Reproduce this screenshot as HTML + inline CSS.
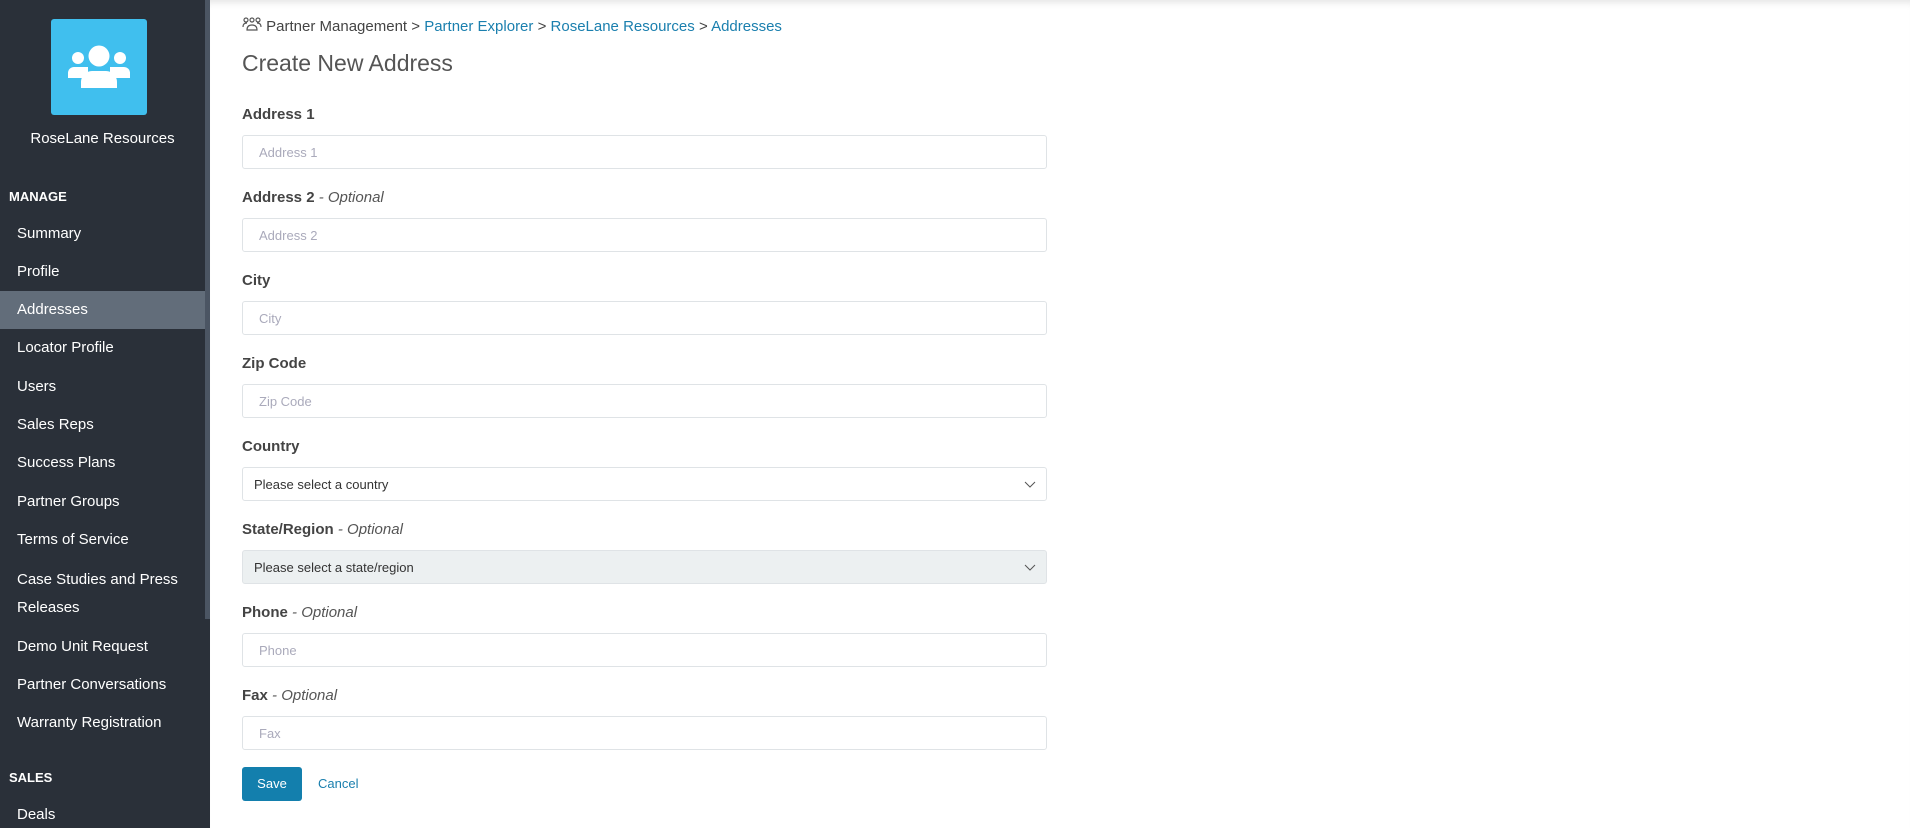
<!DOCTYPE html>
<html><head><meta charset="utf-8"><style>
*{box-sizing:border-box;margin:0;padding:0}
body{width:1910px;height:828px;overflow:hidden;background:#fff;font-family:"Liberation Sans",sans-serif;position:relative}
#sb{position:absolute;left:0;top:0;width:205px;height:828px;background:#2a3039;color:#fff}
#scroll{position:absolute;left:205px;top:0;width:5px;height:828px;background:#2a3039}
#scroll div{width:5px;height:619px;background:#4b5563}
.logo{position:absolute;left:51px;top:19px;width:96px;height:96px;background:#40bfee;border-radius:3px}
.name{position:absolute;left:0;width:205px;top:130px;text-align:center;font-size:15px}
.hd{position:absolute;left:9px;font-size:13px;font-weight:bold}
.it{position:absolute;left:17px;font-size:15px;line-height:20px}
.act{position:absolute;left:0;top:291px;width:205px;height:38px;background:#626d7a}
#main{position:absolute;left:210px;top:0;right:0;height:828px;box-shadow:inset 0 8px 8px -6px rgba(0,0,0,.12)}
.bc{position:absolute;left:242px;top:17px;font-size:15px;color:#444}
.bc a{color:#1a7fae;text-decoration:none}
h1{position:absolute;left:242px;top:50px;font-size:23px;font-weight:300;color:#555}
.lb{position:absolute;left:242px;font-size:15px;font-weight:bold;color:#444}
.lb i{font-weight:normal;color:#555}
.in{position:absolute;left:242px;width:805px;height:34px;border:1px solid #dfe3e6;border-radius:3px;font-size:13px;color:#aab;padding:9px 0 0 16px}
.sel{color:#333;padding-left:11px}
.sel svg{position:absolute;right:10px;top:13px}
.btn{position:absolute;left:242px;top:767px;width:60px;height:34px;background:#137fad;border-radius:3px;color:#fff;font-size:13px;text-align:center;line-height:34px}
.cc{position:absolute;left:318px;top:776px;font-size:13px;color:#1a7fae}
</style></head><body>
<div id="sb">
<div class="logo"><svg width="96" height="96" viewBox="0 0 96 96" fill="#fff">
<circle cx="48" cy="37" r="10.5"/><circle cx="27" cy="39" r="6"/><circle cx="69" cy="39" r="6"/>
<path d="M17 59v-5a6 6 0 0 1 6-6h14v11z"/><path d="M79 59v-5a6 6 0 0 0-6-6h-14v11z"/>
<path d="M30 69v-6a11 11 0 0 1 11-11h14a11 11 0 0 1 11 11v6z"/>
</svg></div>
<div class="name">RoseLane Resources</div>
<div class="hd" style="top:189px">MANAGE</div>
<div class="act"></div>
<div class="it" style="top:224px">Summary</div>
<div class="it" style="top:262px">Profile</div>
<div class="it" style="top:300px">Addresses</div>
<div class="it" style="top:338px">Locator Profile</div>
<div class="it" style="top:377px">Users</div>
<div class="it" style="top:415px">Sales Reps</div>
<div class="it" style="top:453px">Success Plans</div>
<div class="it" style="top:492px">Partner Groups</div>
<div class="it" style="top:530px">Terms of Service</div>
<div class="it" style="top:566px;line-height:28px">Case Studies and Press<br>Releases</div>
<div class="it" style="top:637px">Demo Unit Request</div>
<div class="it" style="top:675px">Partner Conversations</div>
<div class="it" style="top:713px">Warranty Registration</div>
<div class="hd" style="top:770px">SALES</div>
<div class="it" style="top:805px">Deals</div>
</div>
<div id="scroll"><div></div></div>
<div id="main"></div>
<div class="bc"><svg width="20" height="14" viewBox="0 0 20 14" fill="none" stroke="#555" stroke-width="1.2" style="vertical-align:0"><circle cx="4" cy="3" r="2"/><circle cx="10" cy="3" r="2"/><circle cx="16" cy="3" r="2"/><path d="M1 10q0-4 4-4M19 10q0-4-4-4M5 13q0-5 5-5t5 5z"/></svg> Partner Management &gt; <a>Partner Explorer</a> &gt; <a>RoseLane Resources</a> &gt; <a>Addresses</a></div>
<h1>Create New Address</h1>
<div class="lb" style="top:106px">Address 1</div>
<div class="in" style="top:135px">Address 1</div>
<div class="lb" style="top:189px">Address 2 <i>- <em>Optional</em></i></div>
<div class="in" style="top:218px">Address 2</div>
<div class="lb" style="top:272px">City</div>
<div class="in" style="top:301px">City</div>
<div class="lb" style="top:355px">Zip Code</div>
<div class="in" style="top:384px">Zip Code</div>
<div class="lb" style="top:438px">Country</div>
<div class="in sel" style="top:467px">Please select a country<svg width="12" height="7"><path d="M1 1l5 5 5-5" stroke="#555" fill="none"/></svg></div>
<div class="lb" style="top:521px">State/Region <i>- <em>Optional</em></i></div>
<div class="in sel" style="top:550px;background:#ecf0f1">Please select a state/region<svg width="12" height="7"><path d="M1 1l5 5 5-5" stroke="#555" fill="none"/></svg></div>
<div class="lb" style="top:604px">Phone <i>- <em>Optional</em></i></div>
<div class="in" style="top:633px">Phone</div>
<div class="lb" style="top:687px">Fax <i>- <em>Optional</em></i></div>
<div class="in" style="top:716px">Fax</div>
<div class="btn">Save</div>
<div class="cc">Cancel</div>
</body></html>
